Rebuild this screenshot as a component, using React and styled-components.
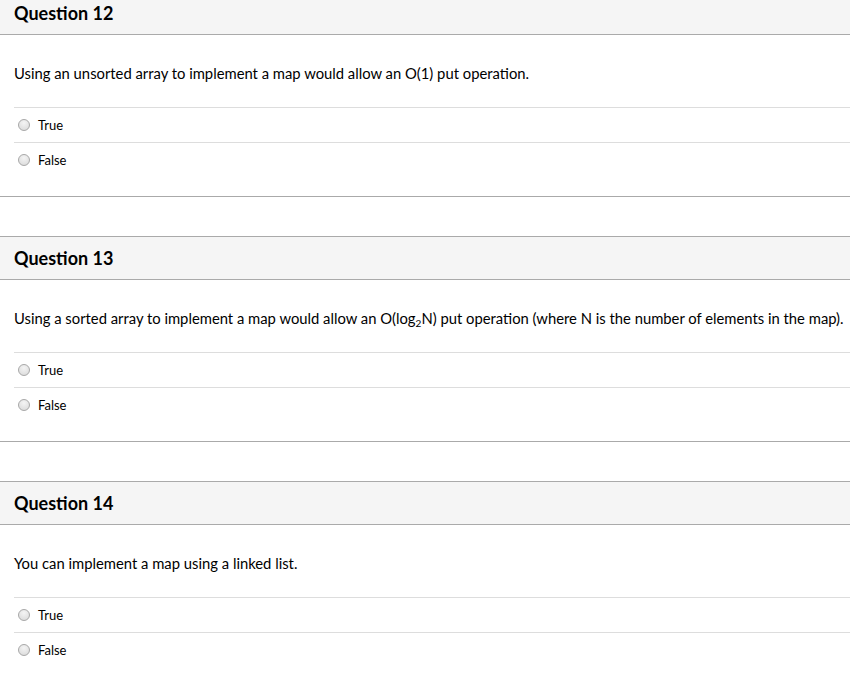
import React from "react";
import styled, { createGlobalStyle } from "styled-components";

const Global = createGlobalStyle`
  html, body { margin: 0; padding: 0; background: #fff; }
  body { font-family: Lato, "Noto Sans", sans-serif; color: #2d3b45; overflow: hidden; }
`;

const List = styled.div`
  display: flex;
  flex-direction: column;
  gap: 39px;
  margin-top: -9px;
`;

const Question = styled.section`
  border-top: 1px solid #aaaaaa;
  border-bottom: 1px solid #aaaaaa;
`;

const Header = styled.div`
  height: 42px;
  background: #f5f5f5;
  border-bottom: 1px solid #aaaaaa;
  display: flex;
  align-items: center;
  padding-left: 14px;
  font-size: 18px;
  font-weight: 700;
  color: #000;
`;

const Body = styled.div`
  padding: 28px 0 19px 14px;
`;

const Text = styled.div`
  font-size: 14.8px;
  line-height: 20px;
  color: #000;
  margin-bottom: 24px;
  sub { font-size: 10px; vertical-align: -3px; line-height: 0; }
`;

const Answer = styled.label`
  display: flex;
  align-items: center;
  height: 33px;
  padding-bottom: 1px;
  border-top: 1px solid #dddddd;
  font-size: 13px;
  color: #000;
`;

const Radio = styled.span`
  width: 10px;
  height: 10px;
  border-radius: 50%;
  border: 1px solid #a8a8a8;
  background: radial-gradient(circle at 50% 30%, #f4f4f4 0%, #d8d8d8 100%);
  margin: 1px 8px 0 4px;
  box-sizing: content-box;
`;

const questions = [
  { n: 12, text: <>Using an unsorted array to implement a map would allow an O(1) put operation.</> },
  {
    n: 13,
    text: (
      <>
        Using a sorted array to implement a map would allow an O(log<sub>2</sub>N) put operation (where N is the number of elements in the map).
      </>
    ),
  },
  { n: 14, text: <>You can implement a map using a linked list.</> },
];

export default function App() {
  return (
    <>
      <Global />
      <List>
        {questions.map((q) => (
          <Question key={q.n}>
            <Header>Question {q.n}</Header>
            <Body>
              <Text>{q.text}</Text>
              {["True", "False"].map((a) => (
                <Answer key={a}>
                  <Radio />
                  {a}
                </Answer>
              ))}
            </Body>
          </Question>
        ))}
      </List>
    </>
  );
}
